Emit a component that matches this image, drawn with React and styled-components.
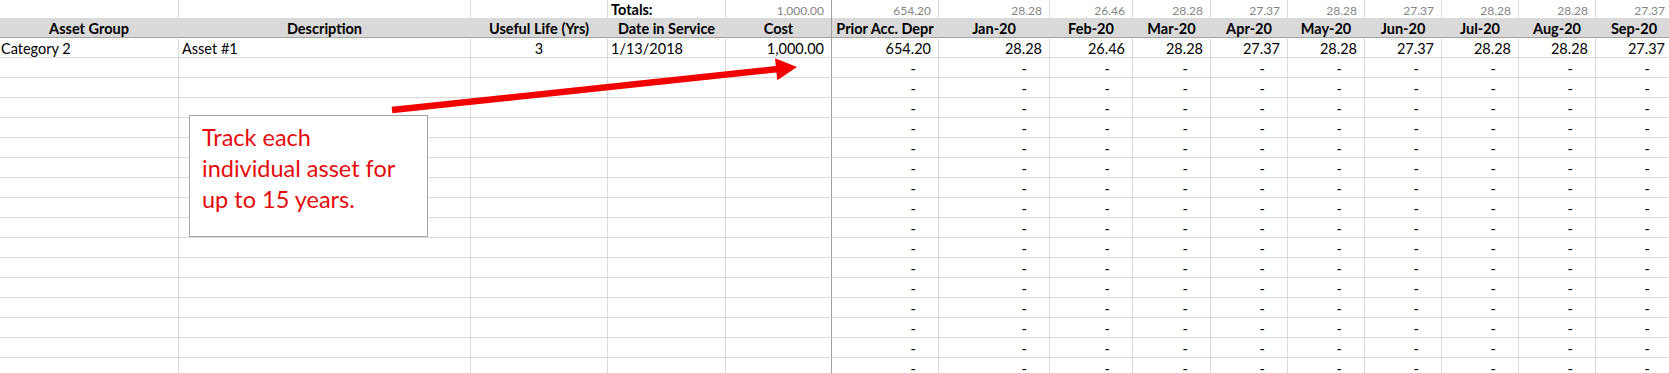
import React from "react";
import styled, { createGlobalStyle } from "styled-components";

const COLS = [179, 292, 137, 118, 106, 107, 111, 83, 78, 77, 77, 77, 77, 77, 77];
const TEMPLATE = COLS.map((w) => `${w}px`).join(" ");
const FROZEN_COL = 4;

const GRID = "#dadada";
const FROZEN = "#9f9f9f";

const GlobalStyle = createGlobalStyle`
  html, body { margin: 0; padding: 0; background: #fff; }
  body { overflow: hidden; font-family: Lato, "Open Sans", "Liberation Sans", sans-serif; }
`;

const Sheet = styled.div`
  position: relative;
  width: 1669px;
  height: 373px;
  overflow: hidden;
  background: #fff;
  color: #000;
`;

const Row = styled.div`
  display: grid;
  grid-template-columns: ${TEMPLATE};
  height: ${(p) => p.$h}px;
  background: ${(p) => (p.$header ? "#d9d9d9" : "#fff")};
`;

const Cell = styled.div`
  box-sizing: border-box;
  display: flex;
  align-items: flex-end;
  justify-content: ${(p) =>
    p.$align === "right" ? "flex-end" : p.$align === "center" ? "center" : "flex-start"};
  padding: 0 ${(p) => p.$pr ?? 3}px ${(p) => p.$pb ?? 1}px ${(p) => p.$pl ?? 3}px;
  border-right: 1px solid
    ${(p) => (p.$frozen ? FROZEN : p.$header ? "transparent" : GRID)};
  border-bottom: ${(p) =>
    p.$top ? "none" : p.$header ? "1px solid #a3a3a3" : `1px solid ${GRID}`};
  white-space: nowrap;
  overflow: visible;
  font-size: ${(p) => (p.$small ? 12 : 14.5)}px;
  font-weight: ${(p) => (p.$bold ? 700 : 400)};
  color: ${(p) => (p.$muted ? "#858585" : "#000")};
  line-height: 1;
`;

const Dash = styled.span`
  padding-right: 22px;
`;

const Callout = styled.div`
  position: absolute;
  left: 189px;
  top: 115px;
  width: 239px;
  height: 122px;
  box-sizing: border-box;
  border: 1px solid #a7a7a7;
  background: #fff;
  padding: 6px 8px 0 12px;
  color: #e60b0b;
  font-family: Lato, "Open Sans", sans-serif;
  font-size: 23.5px;
  line-height: 31px;
  white-space: nowrap;
`;

const Overlay = styled.svg`
  position: absolute;
  left: 0;
  top: 0;
  pointer-events: none;
`;

const months = ["Jan-20", "Feb-20", "Mar-20", "Apr-20", "May-20", "Jun-20", "Jul-20", "Aug-20", "Sep-20"];
const values = ["28.28", "26.46", "28.28", "27.37", "28.28", "27.37", "28.28", "28.28", "27.37"];

function TotalsRow() {
  const cells = [
    { text: "" },
    { text: "" },
    { text: "" },
    { text: "Totals:", bold: true },
    { text: "1,000.00", align: "right", muted: true, small: true },
    { text: "654.20", align: "right", muted: true, small: true },
    ...values.map((v) => ({ text: v, align: "right", muted: true, small: true })),
  ];
  return (
    <Row $h={18}>
      {cells.map((c, i) => (
        <Cell
          key={i}
          $top
          $frozen={i === FROZEN_COL}
          $align={c.align}
          $bold={c.bold}
          $muted={c.muted}
          $small={c.small}
          $pr={c.align === "right" ? 7 : 3}
        >
          {c.text}
        </Cell>
      ))}
    </Row>
  );
}

function HeaderRow() {
  const heads = [
    "Asset Group",
    "Description",
    "Useful Life (Yrs)",
    "Date in Service",
    "Cost",
    "Prior Acc. Depr",
    ...months,
  ];
  return (
    <Row $h={20} $header>
      {heads.map((h, i) => (
        <Cell key={h} $header $bold $align="center" $frozen={i === FROZEN_COL} $pl={0} $pr={0}>
          {h}
        </Cell>
      ))}
    </Row>
  );
}

function DataRow() {
  const cells = [
    { text: "Category 2", pl: 1 },
    { text: "Asset #1" },
    { text: "3", align: "center" },
    { text: "1/13/2018" },
    { text: "1,000.00", align: "right" },
    { text: "654.20", align: "right" },
    ...values.map((v) => ({ text: v, align: "right" })),
  ];
  return (
    <Row $h={20}>
      {cells.map((c, i) => (
        <Cell
          key={i}
          $frozen={i === FROZEN_COL}
          $align={c.align}
          $pl={c.pl}
          $pr={c.align === "right" ? 7 : 3}
        >
          {c.text}
        </Cell>
      ))}
    </Row>
  );
}

function EmptyRow() {
  return (
    <Row $h={20}>
      {COLS.map((_, i) => (
        <Cell key={i} $frozen={i === FROZEN_COL} $align="right" $pr={0}>
          {i > FROZEN_COL ? <Dash>-</Dash> : null}
        </Cell>
      ))}
    </Row>
  );
}

function Arrow() {
  // shaft from (392,110) to tip (797,67)
  const x1 = 392, y1 = 110, tx = 797, ty = 67;
  const dx = tx - x1, dy = ty - y1;
  const len = Math.hypot(dx, dy);
  const ux = dx / len, uy = dy / len;
  const hl = 21, hw = 11;
  const bx = tx - ux * hl, by = ty - uy * hl;
  const px = -uy, py = ux;
  const pts = [
    [tx, ty],
    [bx + px * hw, by + py * hw],
    [bx - px * hw, by - py * hw],
  ]
    .map((p) => p.join(","))
    .join(" ");
  return (
    <Overlay width="1669" height="373" viewBox="0 0 1669 373">
      <line x1={x1} y1={y1} x2={bx + ux * 2} y2={by + uy * 2} stroke="#f20000" strokeWidth="6.5" />
      <polygon points={pts} fill="#f20000" />
    </Overlay>
  );
}

export default function App() {
  return (
    <>
      <GlobalStyle />
      <Sheet>
        <TotalsRow />
        <HeaderRow />
        <DataRow />
        {Array.from({ length: 16 }, (_, i) => (
          <EmptyRow key={i} />
        ))}
        <Arrow />
        <Callout>
          Track each
          <br />
          individual asset for
          <br />
          up to 15 years.
        </Callout>
      </Sheet>
    </>
  );
}
